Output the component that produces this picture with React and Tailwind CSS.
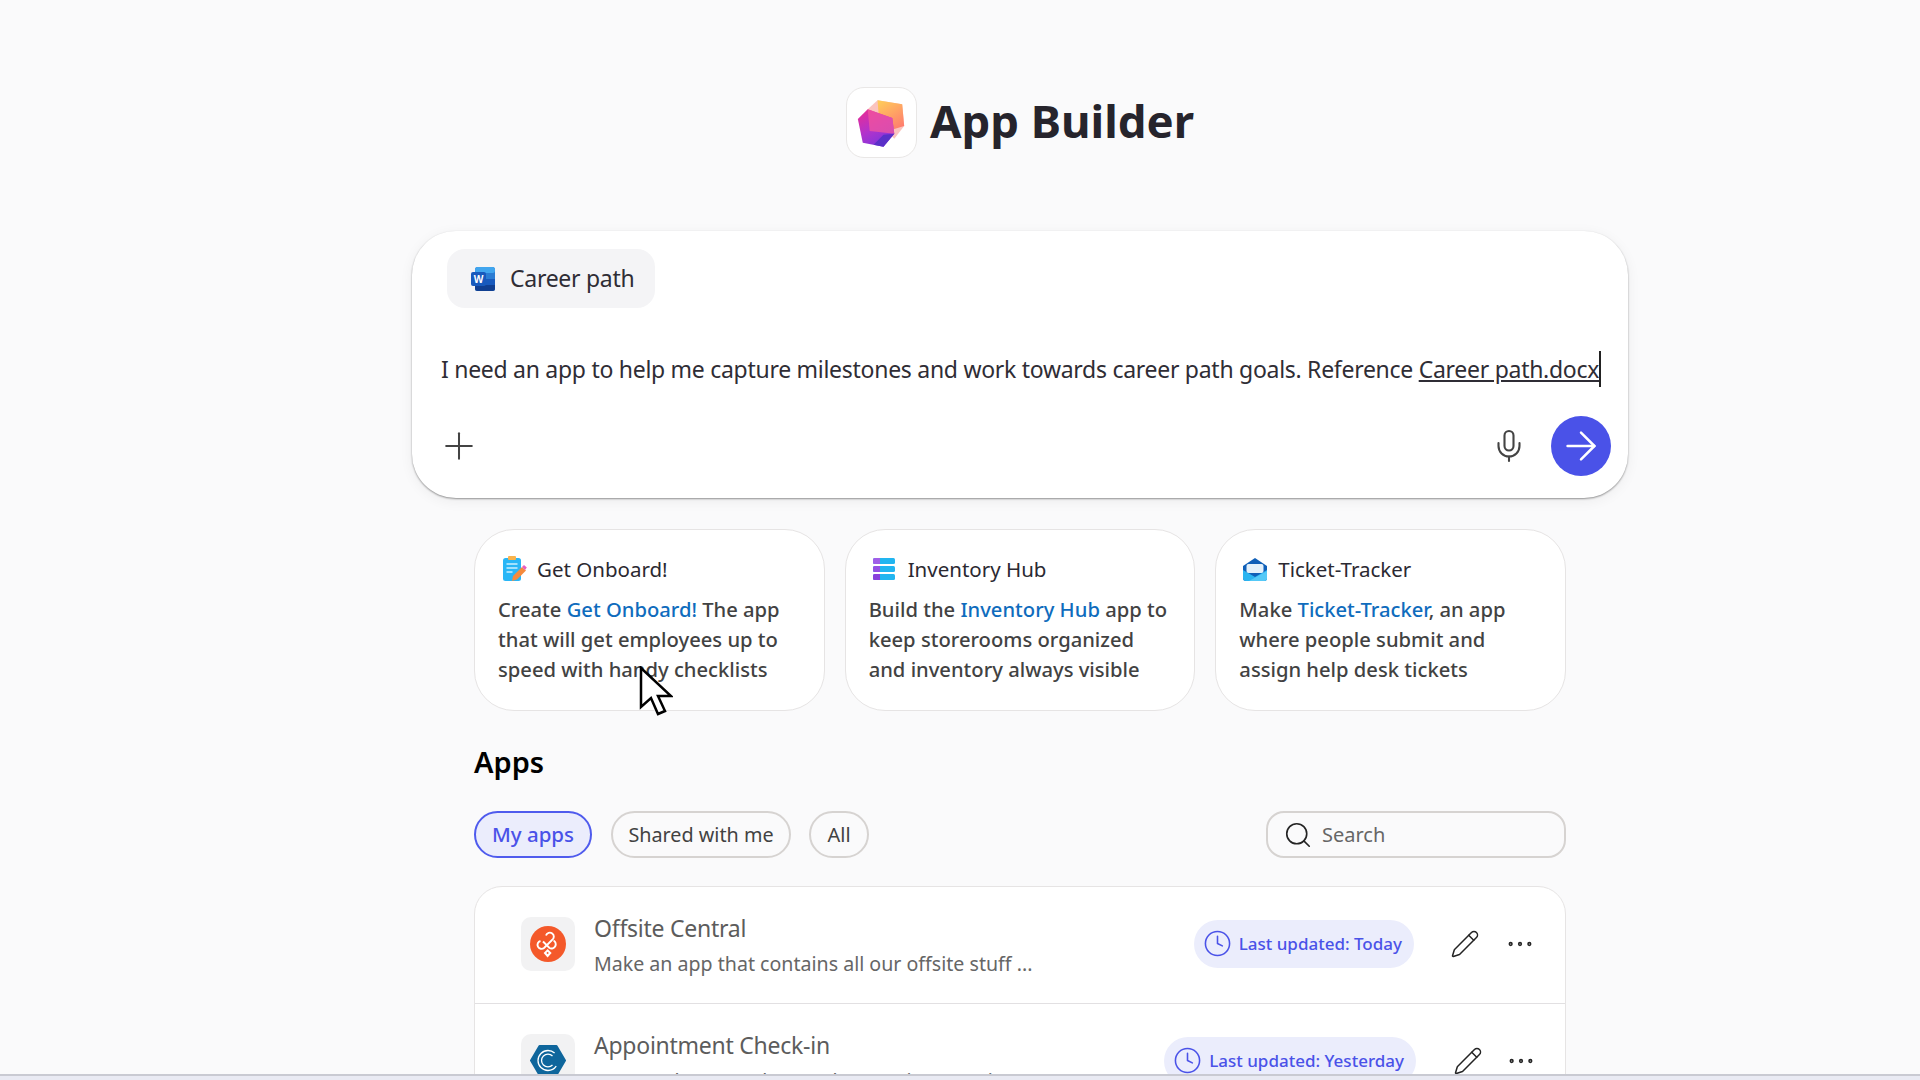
import React from "react";
import { Plus, Mic, ArrowRight, Search, Clock, Pencil, MoreHorizontal } from "lucide-react";

const fontStack = { fontFamily: '"Noto Sans", sans-serif' };

const LogoMark = () => (
  <svg width="70" height="70" viewBox="0 0 70 70">
    <defs>
      <linearGradient id="lgBack" x1="0.2" y1="0" x2="0.8" y2="1">
        <stop offset="0" stopColor="#ffc95a" />
        <stop offset="1" stopColor="#ff7d6e" />
      </linearGradient>
      <linearGradient id="lgFront" x1="0.1" y1="0" x2="0.6" y2="1">
        <stop offset="0" stopColor="#ea2d93" />
        <stop offset="0.55" stopColor="#b233cc" />
        <stop offset="1" stopColor="#7d35dc" />
      </linearGradient>
    </defs>
    <path d="M31 12 L56 16 L58 38 L48 51 L37 40 L21 21 Z" fill="#fbc4be" />
    <path d="M31 12 L56 16 L58 38 L48 41 L38 36 L32 25 Z" fill="url(#lgBack)" />
    <path d="M11 31 L21 21 L46 30 L48 46 L37 59 L16 55 Z" fill="url(#lgFront)" />
    <path d="M21 21 L46 30 L48 46 L23 43 Z" fill="#f2559f" opacity="0.75" />
    <path d="M48 46 L37 59 L27 57 L37 47 Z" fill="#5a30c8" />
  </svg>
);

const WordIcon = () => (
  <svg width="24" height="24" viewBox="0 0 24 24">
    <rect x="4" y="0" width="20" height="24" rx="2.5" fill="#2b7cd3" />
    <rect x="4" y="0" width="20" height="6" rx="2.5" fill="#41a5ee" />
    <rect x="4" y="12" width="20" height="6" fill="#185abd" />
    <path d="M4 18h20v3.500a2.500 2.500 0 0 1-2.500 2.500h-15A2.500 2.500 0 0 1 4 21.500z" fill="#103f91" />
    <rect x="0" y="5" width="15" height="14" rx="2" fill="#185abd" />
    <text x="7.5" y="15.500" textAnchor="middle" fontSize="10" fontWeight="700" fill="#fff" fontFamily="Noto Sans, sans-serif">W</text>
  </svg>
);

const OnboardIcon = () => (
  <svg width="25" height="26" viewBox="0 0 25 26">
    <rect x="1" y="2" width="18" height="23" rx="2.500" fill="#29b6f6" />
    <rect x="6" y="0" width="8" height="4" rx="1" fill="#f9b34c" />
    <path d="M4.500 8h11M4.500 12h11M4.500 16h6" stroke="#c9f0ff" strokeWidth="1.600" />
    <path d="M10 25l1-5 9-9 4 3.500-9 9z" fill="#f58a3c" />
    <path d="M20 11l2-2 2.800 2.600-1.800 2.400z" fill="#e85ec0" />
  </svg>
);

const HubIcon = () => (
  <svg width="22" height="22" viewBox="0 0 22 22">
    <rect x="0" y="0" width="22" height="6" rx="1.500" fill="#22b5f0" />
    <rect x="0" y="8" width="22" height="6" rx="1.500" fill="#22b5f0" />
    <rect x="0" y="16" width="22" height="6" rx="1.500" fill="#22b5f0" />
    <path d="M1.500 0H7v6H1.500A1.500 1.500 0 0 1 0 4.500v-3A1.500 1.500 0 0 1 1.500 0z" fill="#a05ee8" />
    <path d="M1.500 8H7v6H1.500A1.500 1.500 0 0 1 0 12.500v-3A1.500 1.500 0 0 1 1.500 8z" fill="#9450e4" />
    <path d="M1.500 16H7v6H1.500A1.500 1.500 0 0 1 0 20.500v-3A1.500 1.500 0 0 1 1.500 16z" fill="#8a40dc" />
  </svg>
);

const TicketIcon = () => (
  <svg width="24" height="23" viewBox="0 0 24 23">
    <path d="M0 8 L12 0 L24 8 V20 a3 3 0 0 1 -3 3 H3 a3 3 0 0 1 -3 -3 Z" fill="#0f5fb8" />
    <path d="M0 12 L12 19 L24 12 V20 a3 3 0 0 1 -3 3 H3 a3 3 0 0 1 -3 -3 Z" fill="#2ab4f0" />
    <rect x="3.500" y="6" width="17" height="9" rx="2" fill="#e4f1fb" />
    <path d="M6 23 L24 13 V20 a3 3 0 0 1 -3 3 Z" fill="#55c9f7" />
  </svg>
);

const OffsiteIcon = () => (
  <svg width="36" height="36" viewBox="0 0 36 36">
    <circle cx="18" cy="18" r="18" fill="#f4592a" />
    <g fill="none" stroke="#fff" strokeWidth="1.900">
      <path d="M16 9.500 A4 4 0 1 1 22 14 L14 22 A4 4 0 1 1 10.500 15" />
      <path d="M13 15.500 L19.500 22 A4 4 0 1 0 23.500 14.500" />
    </g>
    <path d="M17.600 23 l4 4 -4 4.500 -4 -4.500z" fill="#fff" />
    <path d="M17.600 25.800 l1.200 1.200 -1.200 1.300 -1.200 -1.300z" fill="#f4592a" />
  </svg>
);

const CheckinIcon = () => (
  <svg width="36" height="31" viewBox="0 0 36 31">
    <path d="M9.500 1 H26.500 L35 15.500 L26.500 30 H9.500 L1 15.500 Z" fill="#0f669c" stroke="#0f669c" strokeWidth="2" strokeLinejoin="round" />
    <circle cx="18" cy="15.500" r="10" fill="none" stroke="#fff" strokeWidth="1.300" strokeDasharray="48 15" strokeDashoffset="-6" />
    <path d="M22.500 11 a6.400 6.400 0 1 0 0 9" fill="none" stroke="#fff" strokeWidth="1.300" />
  </svg>
);

const Cursor = () => (
  <svg width="34" height="52" viewBox="0 0 34 52" className="absolute left-[639px] top-[666px]">
    <path d="M2 2 L2 41 L12 32 L19 48 L26 45 L19 30 L32 30 Z" fill="#fff" stroke="#000" strokeWidth="2.500" strokeLinejoin="miter" />
  </svg>
);

const suggestions = [
  {
    title: "Get Onboard!",
    icon: <OnboardIcon />,
    pre: "Create ",
    link: "Get Onboard!",
    post: " The app that will get employees up to speed with handy checklists",
  },
  {
    title: "Inventory Hub",
    icon: <HubIcon />,
    pre: "Build the ",
    link: "Inventory Hub",
    post: " app to keep storerooms organized and inventory always visible",
  },
  {
    title: "Ticket-Tracker",
    icon: <TicketIcon />,
    pre: "Make ",
    link: "Ticket-Tracker",
    post: ", an app where people submit and assign help desk tickets",
  },
];

const apps = [
  {
    name: "Offsite Central",
    desc: "Make an app that contains all our offsite stuff ...",
    updated: "Last updated: Today",
    icon: <OffsiteIcon />,
    row: "h-[116px] pr-[29px]",
    pencil: "ml-[36px]",
    dots: "ml-[24px]",
  },
  {
    name: "Appointment Check-in",
    desc: "Let people see and control upcoming appointments ...",
    updated: "Last updated: Yesterday",
    icon: <CheckinIcon />,
    row: "h-[117px] pr-[28px]",
    pencil: "ml-[37px]",
    dots: "ml-[22px]",
  },
];

export default function App() {
  return (
    <div
      className="relative h-[1080px] overflow-hidden bg-[#fafafb] text-[#26242c] flex flex-col items-center pl-[120px]"
      style={fontStack}
    >
      {/* Header */}
      <div className="mt-[87px] flex items-center gap-[13px] shrink-0">
        <div className="w-[71px] h-[71px] rounded-[18px] bg-white border border-[#e9e7e6] flex items-center justify-center">
          <LogoMark />
        </div>
        <h1 className="h-[71px] text-[45.5px] leading-[66px] font-bold text-[#26242c]">App Builder</h1>
      </div>

      {/* Prompt box */}
      <div className="mt-[73px] w-[1216px] h-[267px] shrink-0 rounded-[44px] bg-white shadow-[0_1px_2px_rgba(0,0,0,0.4),0_3px_14px_rgba(0,0,0,0.06)] flex flex-col">
        <div className="ml-[35px] mt-[18px] w-[208px] h-[59px] rounded-[18px] bg-[#f4f4f6] flex items-center pl-[24px] gap-[15px]">
          <WordIcon />
          <span className="text-[23px] tracking-[-0.28px] text-[#2f2d35]">Career path</span>
        </div>
        <p className="ml-[29px] mt-[43px] text-[23px] tracking-[-0.28px] leading-[36px] whitespace-nowrap text-[#2f2d35] flex items-center">
          <span className="whitespace-pre">I need an app to help me capture milestones and work towards career path goals. Reference </span>
          <span className="underline">Career path.docx</span>
          <span className="inline-block w-[2px] h-[36px] bg-[#222]" />
        </p>
        <div className="mt-[29px] h-[60px] flex items-center pl-[25px] pr-[17px]">
          <Plus size={44} strokeWidth={1.1} className="text-[#444]" />
          <Mic size={36} strokeWidth={1.4} className="ml-auto text-[#444]" />
          <div className="ml-[24px] w-[60px] h-[60px] rounded-full bg-[#4a52e8] flex items-center justify-center">
            <ArrowRight size={46} strokeWidth={1.3} className="text-white" />
          </div>
        </div>
      </div>

      <div className="w-[1092px] mt-[31px] shrink-0">
        {/* Suggestion cards */}
        <div className="grid grid-cols-3 gap-[20px]">
          {suggestions.map((card) => (
            <div key={card.title} className="h-[182px] rounded-[40px] bg-white border border-[#e6e4e4] pl-[23px] pr-[24px] pt-[25px]">
              <div className="flex items-center pl-[4px] h-[28px]">
                <span className="w-[35px] shrink-0 flex justify-start">{card.icon}</span>
                <span className="text-[20.5px] text-[#2b2931]">{card.title}</span>
              </div>
              <p className="mt-[11px] text-[20.2px] leading-[30px] font-medium text-[#424242]">
                {card.pre}
                <span className="text-[#0f6cbd]">{card.link}</span>
                {card.post}
              </p>
            </div>
          ))}
        </div>

        {/* Apps */}
        <h2 className="mt-[29px] text-[29px] leading-[44px] font-semibold text-black">Apps</h2>
        <div className="mt-[27px] flex items-center">
          <button className="h-[47px] w-[118px] rounded-full bg-[#ebedfc] border-2 border-[#4f5bed] text-[20.5px] font-medium text-[#4a52e8]">My apps</button>
          <button className="ml-[19px] h-[47px] w-[180px] rounded-full border-2 border-[#d6d3d1] text-[19.8px] text-[#424242]">Shared with me</button>
          <button className="ml-[18px] h-[47px] w-[60px] rounded-full border-2 border-[#d6d3d1] text-[20px] text-[#424242]">All</button>
          <div className="ml-auto w-[300px] h-[47px] rounded-[18px] border-2 border-[#d6d3d1] flex items-center pl-[15px] gap-[9px]">
            <Search size={30} strokeWidth={1.3} className="text-[#242424]" />
            <span className="text-[20px] text-[#666]">Search</span>
          </div>
        </div>

        {/* App list */}
        <div className="mt-[28px] rounded-[28px] bg-white border border-[#e6e4e4]">
          {apps.map((app, i) => (
            <div key={app.name} className={`flex items-center pl-[46px] pb-[3px] ${app.row} ${i > 0 ? "border-t border-[#e2e0e2]" : ""}`}>
              <div className="w-[54px] h-[54px] rounded-[10px] bg-[#f2f2f3] flex items-center justify-center">{app.icon}</div>
              <div className="ml-[19px] mt-[4px]">
                <div className="text-[23px] tracking-[-0.25px] leading-[34px] text-[#5c5c5c]">{app.name}</div>
                <div className="mt-[2px] text-[19.6px] leading-[34px] text-[#666]">{app.desc}</div>
              </div>
              <div className="ml-auto h-[48px] rounded-full bg-[#ebedfc] flex items-center pl-[9px] pr-[12px] gap-[7px] text-[#4a52e8]">
                <Clock size={29} strokeWidth={1.3} />
                <span className="text-[17px] font-medium">{app.updated}</span>
              </div>
              <Pencil size={30} strokeWidth={1.2} className={`${app.pencil} text-[#242424]`} />
              <MoreHorizontal size={32} strokeWidth={1.2} className={`${app.dots} text-[#242424]`} />
            </div>
          ))}
        </div>
      </div>

      {/* Bottom edge of the window over the list */}
      <div className="absolute left-0 right-0 bottom-0 h-[6px] bg-[#e9eaf3] border-t-2 border-[#c9cad2]" />
      <Cursor />
    </div>
  );
}
